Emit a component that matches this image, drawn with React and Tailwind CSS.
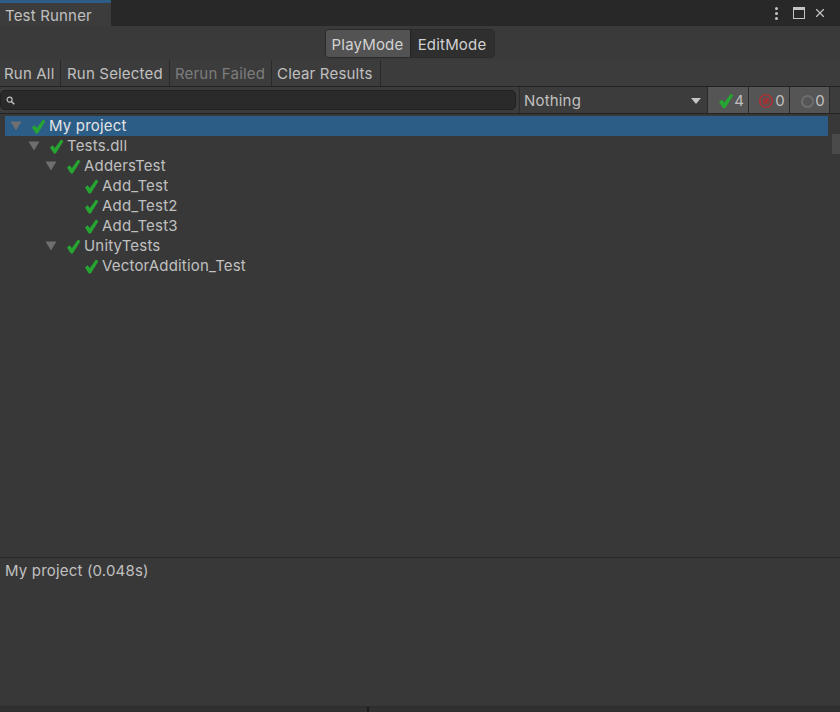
import { X } from "lucide-react";

const font = { fontFamily: "Inter, 'Liberation Sans', sans-serif", letterSpacing: "0.18px" };

function Check({ className = "w-[15px] h-[15px]" }) {
  return (
    <svg viewBox="0 0 15 15" className={className}>
      <path d="M1 8.4 L3.6 6.2 L5.9 9 L12 0.6 L14.4 2.2 L6.8 14.4 L4.8 14.4 Z" fill="#27a532" />
    </svg>
  );
}

function Arrow({ className = "" }) {
  return (
    <svg viewBox="0 0 12 10" className={`w-3 h-2.5 ${className}`}>
      <path d="M0.5 0.5 H11.5 L6 9.5 Z" fill="#6f6f6f" />
    </svg>
  );
}

function TreeRow({ indent, label, arrow, selected }) {
  return (
    <div className={`flex h-5 items-center ${selected ? "bg-[#2c5d87] text-[#e4e4e4]" : "text-[#c0c0c0]"}`}>
      <div className={`flex items-center ${indent}`}>
        <div className="w-[26px] flex items-center">{arrow && <Arrow className="ml-[5px]" />}</div>
        <Check />
        <span className="ml-[3px]">{label}</span>
      </div>
    </div>
  );
}

function ToolButton({ label, dim, className }) {
  return (
    <div className={`h-full flex items-center border-r border-[#2a2a2a] pt-[3px] ${className} ${dim ? "text-[#7d7d7d]" : "text-[#c0c0c0]"}`}>
      {label}
    </div>
  );
}

export default function App() {
  return (
    <div style={font} className="w-[840px] h-[712px] flex flex-col bg-[#383838] text-[15px] overflow-hidden">
      {/* Barra de la ventana */}
      <div className="h-[26px] shrink-0 bg-[#282828] flex justify-between">
        <div className="w-[111px] bg-[#3c3c3c] border-t-[3px] border-[#2c5d87] pl-[5px] text-[#c0c0c0] leading-[25px]">
          Test Runner
        </div>
        <div className="flex items-center text-[#c4c4c4] pr-[15px]">
          <div className="flex flex-col gap-[2px] mr-[15px]">
            <span className="w-[3px] h-[3px] rounded-full bg-[#c4c4c4]" />
            <span className="w-[3px] h-[3px] rounded-full bg-[#c4c4c4]" />
            <span className="w-[3px] h-[3px] rounded-full bg-[#c4c4c4]" />
          </div>
          <div className="w-3 h-3 border border-[#c4c4c4] border-t-[3px] mr-[8px]" />
          <X size={14} strokeWidth={2} className="mr-[-2px]" />
        </div>
      </div>

      <div className="flex-1 flex min-h-0">
        <div className="w-[832px] flex flex-col">
          {/* PlayMode / EditMode */}
          <div className="h-[34px] shrink-0 flex justify-center pt-[3px] pr-[13px] w-[840px] pl-[0px] bg-[#3a3a3a]">
            <div className="h-[29px] flex rounded-[4px] border border-[#2a2a2a] overflow-hidden text-[#d2d2d2] mr-[8px]">
              <div className="w-[84px] bg-[#535353] flex items-center justify-center pt-[3px]">PlayMode</div>
              <div className="w-[84px] bg-[#2f2f2f] border-l border-[#232323] flex items-center justify-center pt-[3px]">EditMode</div>
            </div>
          </div>

          {/* Botones */}
          <div className="h-[27px] shrink-0 flex bg-[#3c3c3c] border-b border-[#232323] w-[840px]">
            <ToolButton label="Run All" className="w-[61px] pl-[4px]" />
            <ToolButton label="Run Selected" className="w-[109px] pl-[6px]" />
            <ToolButton label="Rerun Failed" dim className="w-[102px] pl-[5px]" />
            <ToolButton label="Clear Results" className="w-[109px] pl-[5px]" />
          </div>

          {/* Filtros */}
          <div className="h-[27px] shrink-0 flex items-center bg-[#3c3c3c] border-b border-[#232323] w-[840px]">
            <div className="w-[516px] h-[20px] bg-[#2a2a2a] border border-[#212121] rounded-[5px] flex items-center pl-[5px]">
              <svg viewBox="0 0 10 10" className="w-[9px] h-[9px]">
                <circle cx="4" cy="4" r="2.8" fill="none" stroke="#c4c4c4" strokeWidth="1.3" />
                <path d="M6 6 L9.2 9.2" stroke="#c4c4c4" strokeWidth="1.6" />
              </svg>
            </div>
            <div className="w-[188px] ml-[3px] h-full border-l border-[#2a2a2a] flex items-center justify-between pl-1 pr-[6px] pt-[2px] text-[#c0c0c0]">
              <span>Nothing</span>
              <svg viewBox="0 0 10 6" className="w-[10px] h-[6px]">
                <path d="M0 0 H10 L5 6 Z" fill="#c4c4c4" />
              </svg>
            </div>
            <div className="h-full flex text-[#c0c0c0]">
              <div className="w-[41px] bg-[#555555] border-l border-[#2a2a2a] flex items-center justify-end pr-[4px] pt-[2px]">
                <Check className="w-4 h-4" />
                <span>4</span>
              </div>
              <div className="w-[41px] bg-[#555555] border-l border-[#2a2a2a] flex items-center justify-end pr-[4px] pt-[2px]">
                <svg viewBox="0 0 14 14" className="w-[14px] h-[14px] mr-[2px]">
                  <path d="M4.4 1 H9.6 L13 4.4 V9.6 L9.6 13 H4.4 L1 9.6 V4.4 Z" fill="none" stroke="#c8282c" strokeWidth="1.2" />
                  <circle cx="7" cy="7" r="3.6" fill="#8c3a3a" />
                  <path d="M4.6 9.4 L9.4 4.6" stroke="#c8282c" strokeWidth="1" />
                </svg>
                <span>0</span>
              </div>
              <div className="w-[41px] bg-[#555555] border-l border-r border-[#2a2a2a] flex items-center justify-end pr-[4px] pt-[2px]">
                <span className="w-[13px] h-[13px] rounded-full border-[2px] border-[#6e6e6e] mr-[1px]" />
                <span>0</span>
              </div>
            </div>
          </div>

          {/* Arbol de tests */}
          <div className="h-[443px] shrink-0 pl-[5px] pt-[2px] pr-[4px]">
            <TreeRow indent="pl-0" label="My project" arrow selected />
            <TreeRow indent="pl-[18px]" label="Tests.dll" arrow />
            <TreeRow indent="pl-[35px]" label="AddersTest" arrow />
            <TreeRow indent="pl-[53px]" label="Add_Test" />
            <TreeRow indent="pl-[53px]" label="Add_Test2" />
            <TreeRow indent="pl-[53px]" label="Add_Test3" />
            <TreeRow indent="pl-[35px]" label="UnityTests" arrow />
            <TreeRow indent="pl-[53px]" label="VectorAddition_Test" />
          </div>

          {/* Detalle */}
          <div className="flex-1 border-t border-[#2a2a2a] pl-[5px] pt-[2px] text-[#c0c0c0] w-[840px]">
            My project (0.048s)
          </div>
        </div>

        {/* Scrollbar */}
        <div className="w-2 flex flex-col pt-[108px]">
          <div className="h-[20px] bg-[#4a4a4a]" />
        </div>
      </div>

      {/* Borde inferior */}
      <div className="h-[6px] shrink-0 bg-[#303030] border-t border-[#2c2c2c] flex">
        <div className="w-[367px]" />
        <div className="w-[2px] bg-[#1c1c1c]" />
      </div>
    </div>
  );
}
